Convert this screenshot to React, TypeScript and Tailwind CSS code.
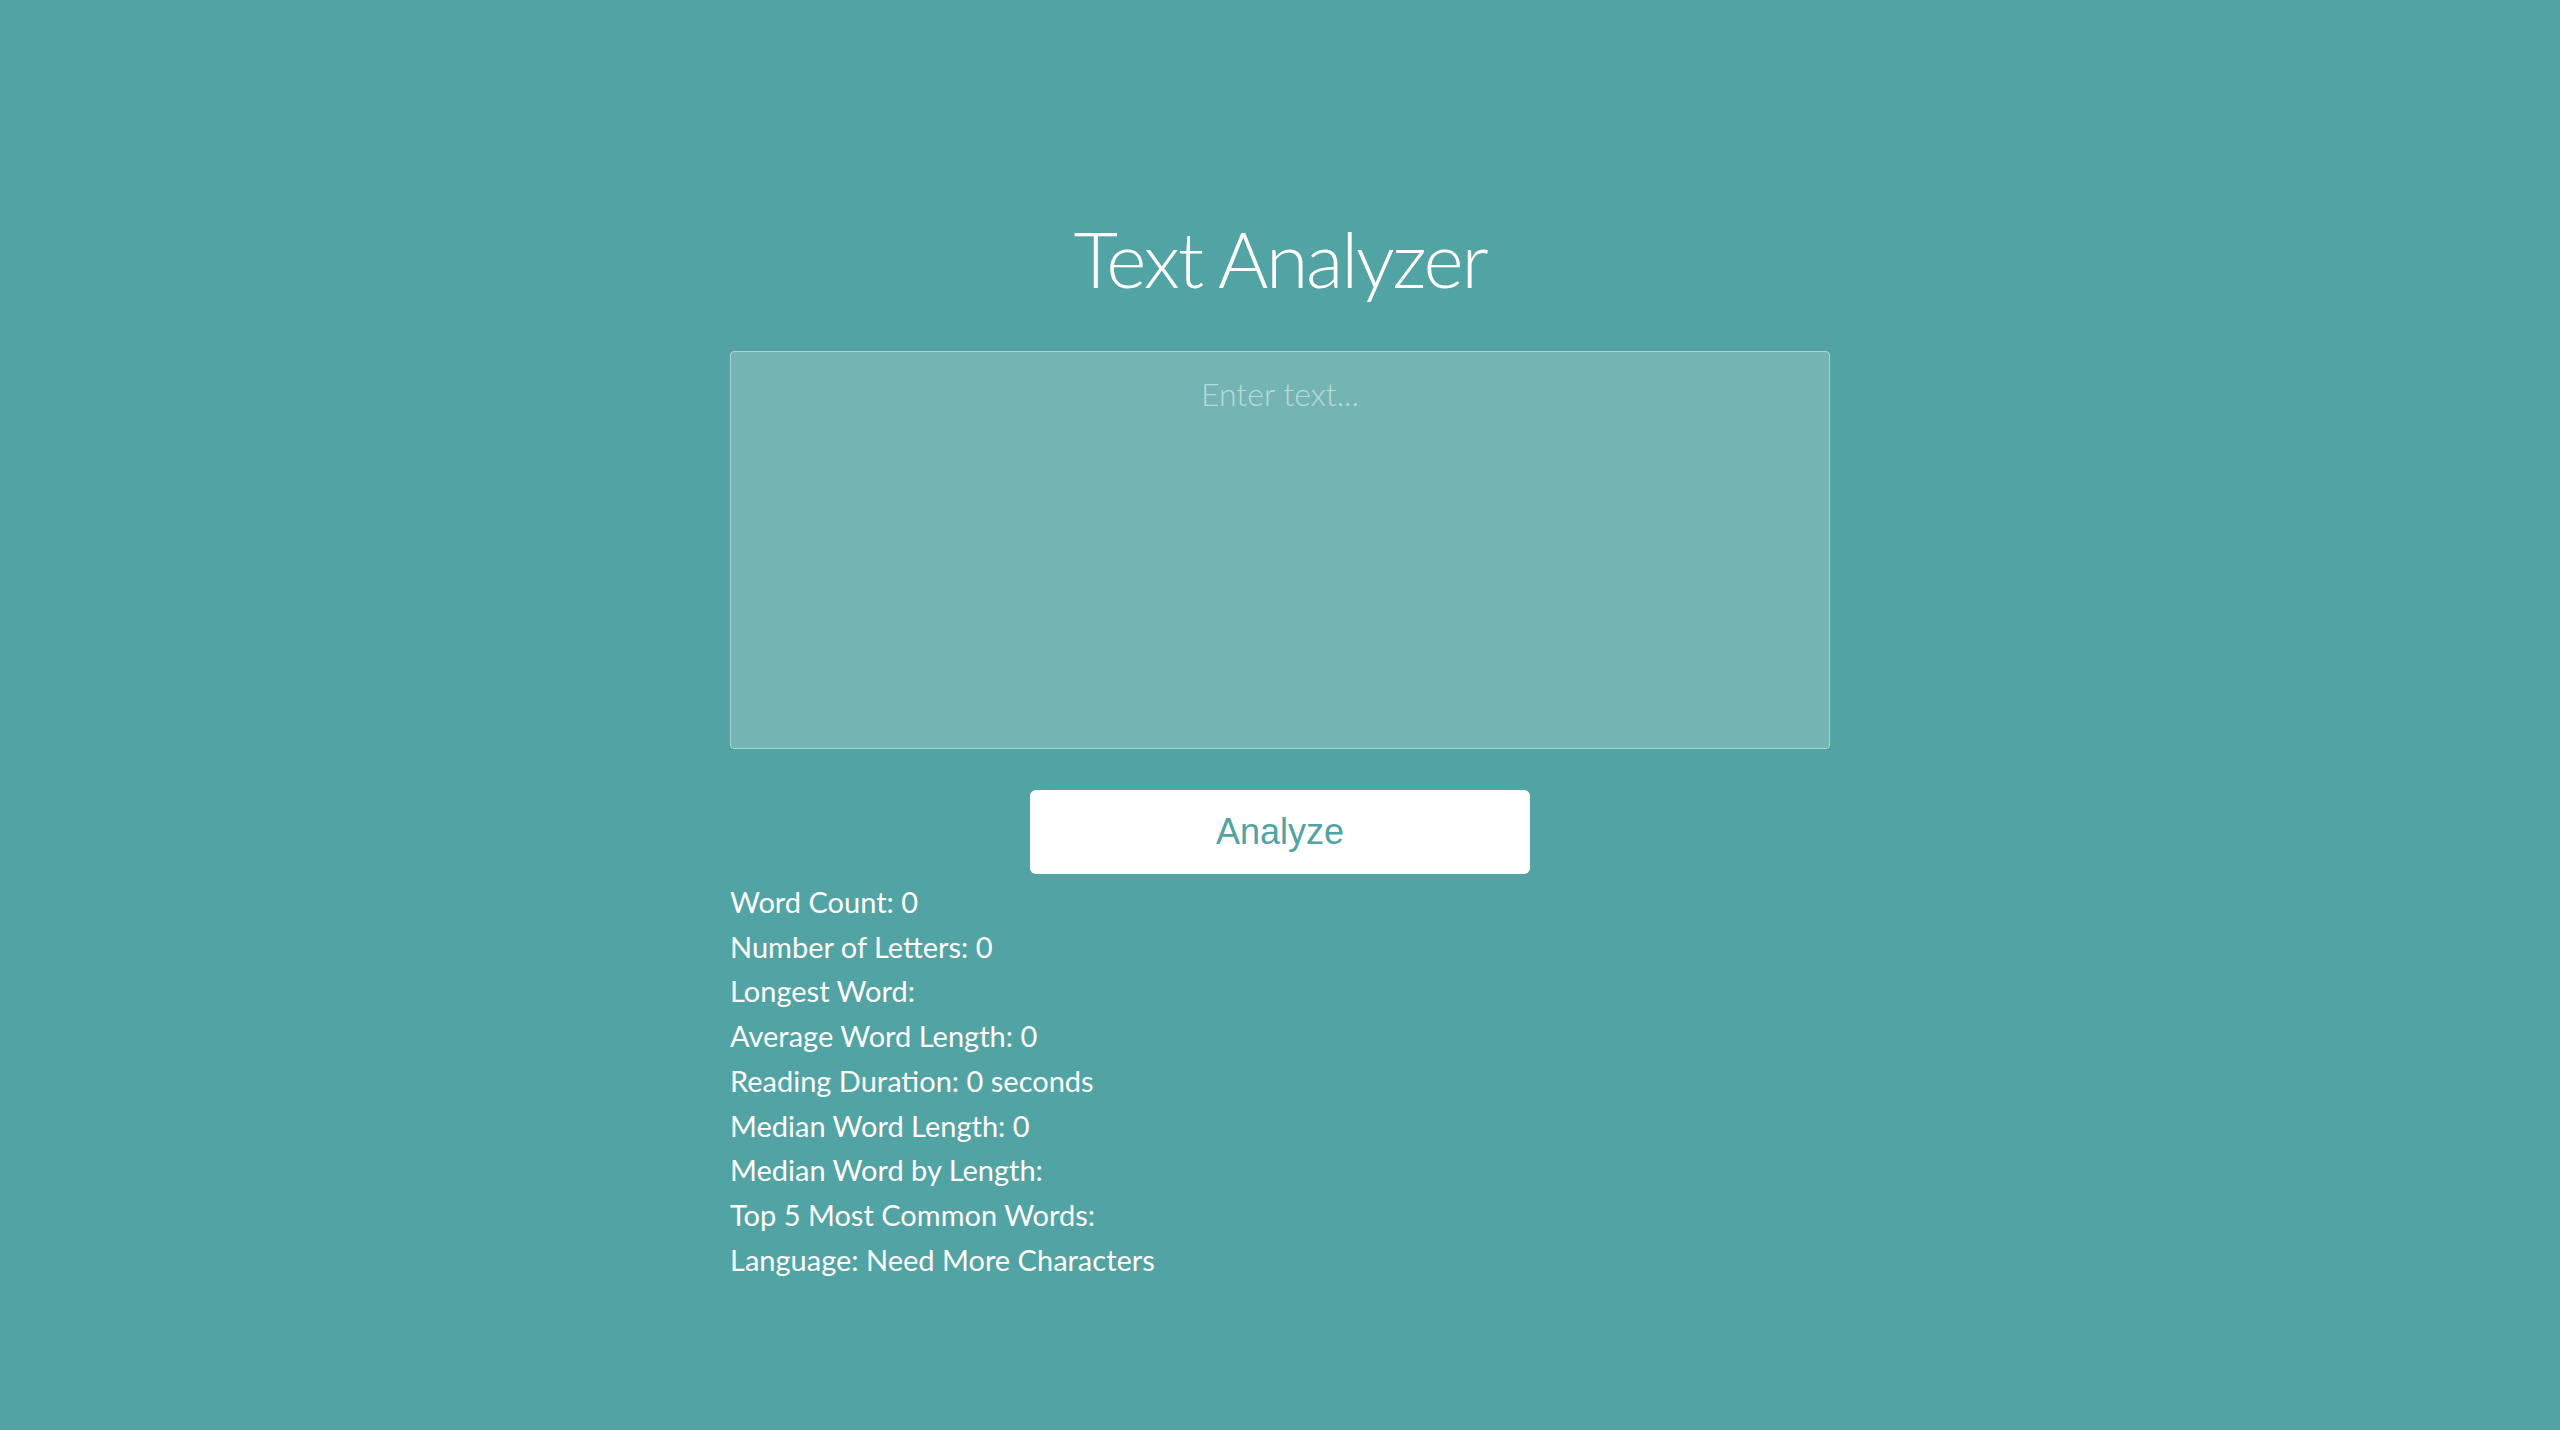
import React, { useState } from 'react';

const stats = [
    'Word Count: 0',
    'Number of Letters: 0',
    'Longest Word:',
    'Average Word Length: 0',
    'Reading Duration: 0 seconds',
    'Median Word Length: 0',
    'Median Word by Length:',
    'Top 5 Most Common Words:',
    'Language: Need More Characters',
];

export default function App() {
    const [text, setText] = useState('');

    return (
        <div className="min-h-screen w-full bg-[#52a3a3] font-['Lato','Noto_Sans',sans-serif] text-white">
            <div className="mx-auto flex w-[1100px] flex-col pt-[220px]">
                <h1 className="text-center text-[77px] font-light leading-none tracking-[-2.2px]">Text Analyzer</h1>

                <textarea
                    value={text}
                    onChange={(e) => setText(e.target.value)}
                    placeholder="Enter text..."
                    className="mt-[54px] h-[398px] w-full resize-none rounded-[4px] border-[1.5px] border-[#acd4d3] bg-[#74b5b4] px-6 pt-[23px] text-center text-[32px] font-light leading-[1.2] text-white outline-none placeholder:text-[#b8dbda]"
                />

                <button className="mx-auto mt-[41px] h-[84px] w-[500px] rounded-[6px] bg-white font-['Liberation_Sans',Arial,sans-serif] text-[36px] text-[#52a3a3]">
                    Analyze
                </button>

                {/* 결과 목록 */}
                <ul className="mt-[6px] flex flex-col">
                    {stats.map((s) => (
                        <li key={s} className="text-[29px] leading-[44.7px]">
                            {s}
                        </li>
                    ))}
                </ul>
            </div>
        </div>
    );
}
